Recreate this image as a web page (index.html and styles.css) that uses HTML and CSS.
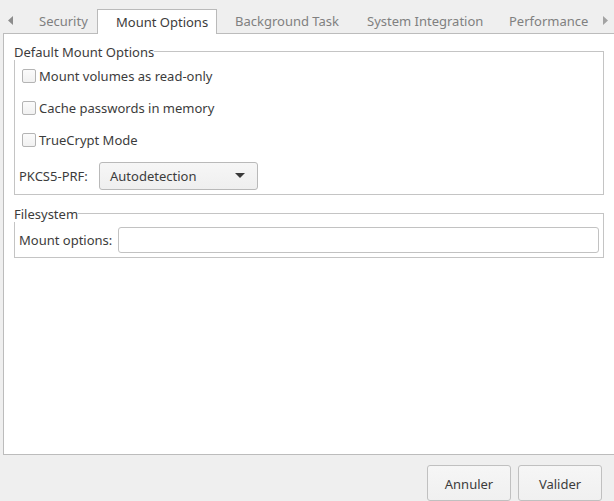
FILE: index.html
```html
<!DOCTYPE html>
<html>
<head>
<meta charset="utf-8">
<link rel="stylesheet" href="styles.css">
</head>
<body>
<div class="window">
  <div class="tabbar">
    <span class="scroll scroll-left"><svg width="5" height="9" viewBox="0 0 5 9"><path d="M5 0 L0 4.5 L5 9 Z" fill="#8c8c8c"/></svg></span>
    <div class="tab tab-security">Security</div>
    <div class="tab tab-mount active">Mount Options</div>
    <div class="tab tab-bg">Background Task</div>
    <div class="tab tab-sys">System Integration</div>
    <div class="tab tab-perf">Performance</div>
    <span class="scroll scroll-right"><svg width="5" height="9" viewBox="0 0 5 9"><path d="M0 0 L5 4.5 L0 9 Z" fill="#a3a3a3"/></svg></span>
  </div>
  <div class="panel">
    <fieldset class="group group-default">
      <legend>Default Mount Options</legend>
      <div class="group-body">
        <label class="check-row"><span class="checkbox"></span><span>Mount volumes as read-only</span></label>
        <label class="check-row"><span class="checkbox"></span><span>Cache passwords in memory</span></label>
        <label class="check-row"><span class="checkbox"></span><span>TrueCrypt Mode</span></label>
        <div class="field-row prf-row">
          <span class="field-label prf-label">PKCS5-PRF:</span>
          <div class="combo"><span>Autodetection</span><svg width="10" height="5" viewBox="0 0 10 5"><path d="M0 0 L10 0 L5 5 Z" fill="#3a3a3a"/></svg></div>
        </div>
      </div>
    </fieldset>
    <fieldset class="group group-fs">
      <legend>Filesystem</legend>
      <div class="group-body fs-body">
        <div class="field-row">
          <span class="field-label opts-label">Mount options:</span>
          <div class="text-input"></div>
        </div>
      </div>
    </fieldset>
  </div>
  <div class="buttons">
    <button class="btn">Annuler</button>
    <button class="btn">Valider</button>
  </div>
</div>
</body>
</html>
```
FILE: styles.css
```css
html, body {
  margin: 0;
  padding: 0;
  background: #efefef;
}
body {
  font-family: "Noto Sans", "Open Sans", sans-serif;
  font-size: 13px;
  color: #3c3c3c;
  width: 614px;
  height: 501px;
  overflow: hidden;
}
.window {
  display: flex;
  flex-direction: column;
  height: 501px;
}
.tabbar {
  display: flex;
  align-items: flex-end;
  height: 33px;
  position: relative;
}
.scroll {
  position: absolute;
  top: 16px;
  display: block;
  line-height: 0;
}
.scroll-left { left: 8px; }
.scroll-right { left: 603px; }
.tab {
  box-sizing: border-box;
  height: 24px;
  padding: 0 0 0 18px;
  line-height: 25px;
  color: #808080;
  white-space: nowrap;
  flex: none;
}
.tab-security { margin-left: 21px; width: 76px; }
.tab-mount { width: 120px; }
.tab-bg { width: 132px; }
.tab-sys { width: 142px; }
.tab-perf { width: 105px; }
.tab.active {
  height: 25px;
  margin-bottom: -1px;
  background: #ffffff;
  border: 1px solid #bababa;
  border-bottom: none;
  padding-left: 18px;
  line-height: 24px;
  color: #3c3c3c;
  position: relative;
  z-index: 1;
}
.panel {
  box-sizing: border-box;
  height: 424px;
  margin-left: 3px;
  background: #ffffff;
  border: 1px solid #bcbcbc;
  border-right: none;
  padding: 10px 10px 0 10px;
  display: flex;
  flex-direction: column;
  gap: 11px;
}
.group {
  margin: 0;
  padding: 0;
  border: 1px solid #c4c4c4;
  min-width: 0;
}
.group legend {
  padding: 0;
  margin-left: -1px;
  line-height: 16px;
}
.group-body {
  padding: 4px 4px 4px 4px;
  display: flex;
  flex-direction: column;
  gap: 8px;
}
.check-row {
  display: flex;
  align-items: center;
  height: 24px;
  gap: 3px;
}
.checkbox {
  box-sizing: border-box;
  width: 14px;
  height: 14px;
  margin-left: 3px;
  border: 1px solid #b4b4b4;
  border-radius: 2px;
  background: linear-gradient(#fbfbfb, #f1f1f1);
}
.field-row {
  display: flex;
  align-items: center;
}
.prf-row {
  margin-top: 2px;
}
.field-label {
  flex: none;
}
.prf-label { width: 80px; }
.opts-label { width: 99px; }
.combo {
  box-sizing: border-box;
  width: 159px;
  height: 28px;
  border: 1px solid #b9b9b9;
  border-radius: 3px;
  background: linear-gradient(#f6f6f6, #efefef);
  display: flex;
  align-items: center;
  justify-content: space-between;
  padding: 0 12px 0 10px;
}
.fs-body {
  padding: 5px 4px 4px 4px;
}
.text-input {
  box-sizing: border-box;
  flex: 1;
  height: 26px;
  border: 1px solid #c2c2c2;
  border-radius: 3px;
  background: #ffffff;
}
.buttons {
  display: flex;
  justify-content: flex-end;
  gap: 7px;
  padding: 10px 12px 0 0;
}
.btn {
  box-sizing: border-box;
  width: 84px;
  height: 36px;
  border: 1px solid #c0c0c0;
  border-radius: 3px;
  background: linear-gradient(#f6f6f6, #f0f0f0);
  font-family: inherit;
  font-size: 13px;
  color: #3c3c3c;
  padding: 2px 0 0 0;
}
```
